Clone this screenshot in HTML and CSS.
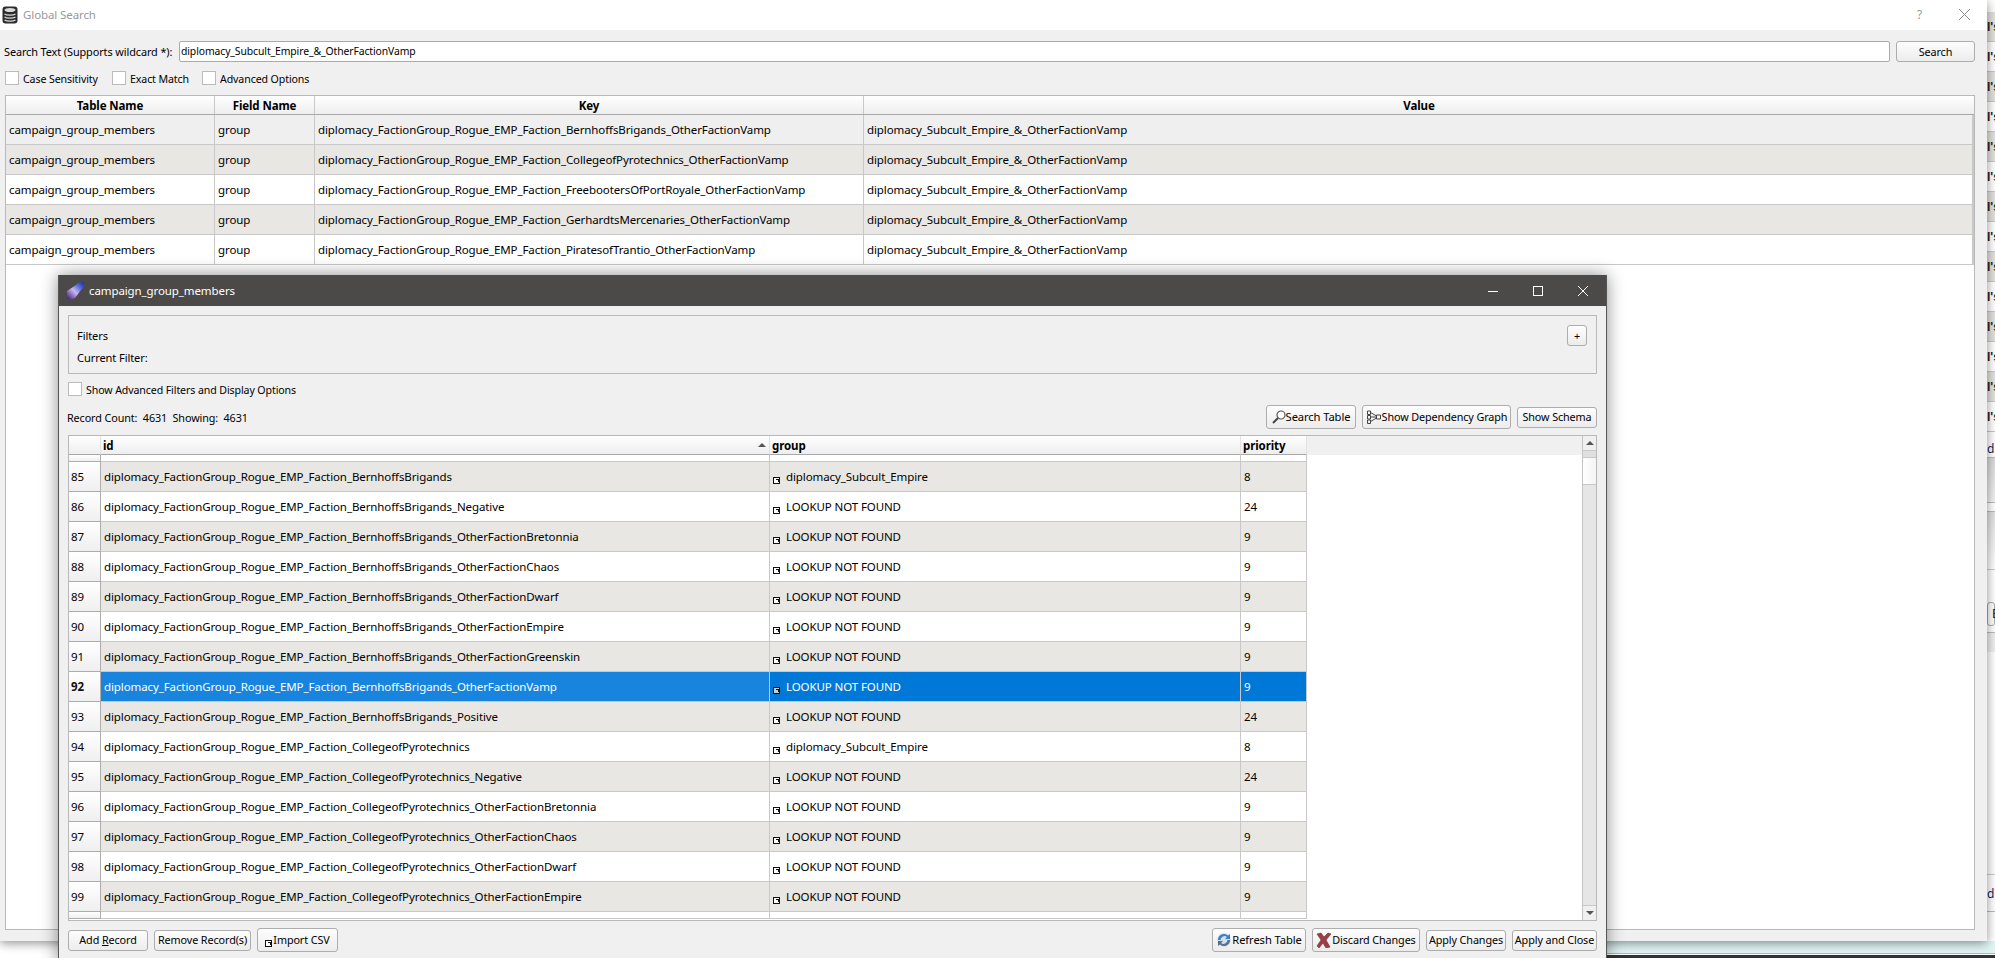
FILE: index.html
```html
<!DOCTYPE html>
<html lang="en">
<head>
<meta charset="utf-8">
<title>Global Search</title>
<link rel="stylesheet" href="styles.css">
</head>
<body>
<div class="desktop">
  <div class="strip">
    <div class="s-top"></div>
    <div class="s-row gray">l's</div><div class="s-row">l's</div><div class="s-row gray">l's</div><div class="s-row">l's</div>
    <div class="s-row gray">l's</div><div class="s-row">l's</div><div class="s-row gray">l's</div><div class="s-row">l's</div>
    <div class="s-row gray">l's</div><div class="s-row">l's</div><div class="s-row gray">l's</div><div class="s-row">l's</div>
    <div class="s-row gray">l's</div><div class="s-row">l's</div>
    <div class="s-d s-d1">d</div>
    <div class="s-grad1"></div>
    <div class="s-gap"></div>
    <div class="s-grad2"></div>
    <div class="s-plain1"></div>
    <div class="s-btn">E</div>
    <div class="s-grad3"></div>
    <div class="s-plain2"></div>
    <div class="s-d s-d2">d</div>
    <div class="s-end"></div>
  </div>
  <div class="desk-bottom"><div class="teal"></div><div class="dark"></div></div>

  <section class="global">
    <header class="g-title">
      <svg class="g-icon" viewBox="0 0 16 18"><rect x="0.5" y="0.5" width="15" height="17" rx="3" fill="#2b2b2b"/><ellipse cx="8" cy="4" rx="5.500" ry="2" fill="#d8d8d8"/><path d="M2.500 8c2 1.600 9 1.600 11 0M2.500 11c2 1.600 9 1.600 11 0M2.500 14c2 1.600 9 1.600 11 0" fill="none" stroke="#d8d8d8" stroke-width="1.200"/></svg>
      <span class="g-name">Global Search</span>
      <span class="g-help">?</span>
      <svg class="g-close" viewBox="0 0 11 11"><path d="M0 0l11 11M11 0L0 11" stroke="#8a8a8a" stroke-width="1" fill="none"/></svg>
    </header>
    <div class="g-body">
      <div class="g-search">
        <label class="g-label">Search Text (Supports wildcard *):</label>
        <div class="g-input">diplomacy_Subcult_Empire_&amp;_OtherFactionVamp</div>
        <button class="btn g-btn">Search</button>
      </div>
      <div class="g-checks">
        <span class="chk"><i class="box"></i>Case Sensitivity</span>
        <span class="chk"><i class="box"></i>Exact Match</span>
        <span class="chk"><i class="box"></i>Advanced Options</span>
      </div>
      <div class="g-table">
        <div class="g-row g-head"><div>Table Name</div><div>Field Name</div><div>Key</div><div>Value</div></div>
        <div class="g-row first"><div>campaign_group_members</div><div>group</div><div>diplomacy_FactionGroup_Rogue_EMP_Faction_BernhoffsBrigands_OtherFactionVamp</div><div>diplomacy_Subcult_Empire_&amp;_OtherFactionVamp</div></div>
        <div class="g-row alt"><div>campaign_group_members</div><div>group</div><div>diplomacy_FactionGroup_Rogue_EMP_Faction_CollegeofPyrotechnics_OtherFactionVamp</div><div>diplomacy_Subcult_Empire_&amp;_OtherFactionVamp</div></div>
        <div class="g-row"><div>campaign_group_members</div><div>group</div><div>diplomacy_FactionGroup_Rogue_EMP_Faction_FreebootersOfPortRoyale_OtherFactionVamp</div><div>diplomacy_Subcult_Empire_&amp;_OtherFactionVamp</div></div>
        <div class="g-row alt"><div>campaign_group_members</div><div>group</div><div>diplomacy_FactionGroup_Rogue_EMP_Faction_GerhardtsMercenaries_OtherFactionVamp</div><div>diplomacy_Subcult_Empire_&amp;_OtherFactionVamp</div></div>
        <div class="g-row"><div>campaign_group_members</div><div>group</div><div>diplomacy_FactionGroup_Rogue_EMP_Faction_PiratesofTrantio_OtherFactionVamp</div><div>diplomacy_Subcult_Empire_&amp;_OtherFactionVamp</div></div>
      </div>
    </div>
  </section>

  <section class="sub">
    <header class="s-title">
      <svg class="s-icon" viewBox="0 0 17 17"><defs><linearGradient id="wand" x1="0" y1="1" x2="1" y2="0"><stop offset="0" stop-color="#3a1a7a"/><stop offset="0.45" stop-color="#c9b8ee"/><stop offset="0.7" stop-color="#5a6fe0"/><stop offset="1" stop-color="#1226b8"/></linearGradient></defs><path d="M0 9L9 3l2-2 6-1-1 6-2 2-6 8-3 1H0z" fill="url(#wand)"/></svg>
      <span class="s-name">campaign_group_members</span>
      <div class="win-btns">
        <svg viewBox="0 0 10 10"><path d="M0 5.500h10" stroke="#fff" fill="none"/></svg>
        <svg viewBox="0 0 10 10"><rect x="0.5" y="0.5" width="9" height="9" stroke="#fff" fill="none"/></svg>
        <svg viewBox="0 0 10 10"><path d="M0 0l10 10M10 0L0 10" stroke="#fff" fill="none"/></svg>
      </div>
    </header>
    <div class="s-body">
      <div class="filters">
        <div class="f-text"><div>Filters</div><div>Current Filter:</div></div>
        <button class="btn plus">+</button>
      </div>
      <div class="adv"><span class="chk"><i class="box"></i>Show Advanced Filters and Display Options</span></div>
      <div class="tools">
        <span class="count">Record Count:&nbsp; 4631&nbsp; Showing:&nbsp; 4631</span>
        <button class="btn tall w-search"><svg class="ic" viewBox="0 0 14 14"><circle cx="9" cy="5" r="4" fill="#fff" stroke="#555" stroke-width="1.200"/><path d="M6 8L1 13" stroke="#444" stroke-width="2" fill="none"/></svg><span>Search Table</span></button>
        <button class="btn tall w-dep"><svg class="ic ic-dep" viewBox="0 0 15 14"><path d="M1.500 1h3v3.500h-3zM1.500 5.500h3V9h-3zM1.500 10h3v3.500h-3zM10.500 5h4v4h-4zM4.500 2.500L10.500 6M4.500 7h6M4.500 11.500L10.500 8" fill="none" stroke="#444"/></svg><span>Show Dependency Graph</span></button>
        <button class="btn w-schema"><span>Show Schema</span></button>
      </div>
      <div class="tbl">
        <div class="tbl-main">
          <div class="t-row t-head"><div></div><div class="sorted">id</div><div>group</div><div>priority</div></div>
          <div class="t-row t-part"><div></div><div></div><div></div><div></div></div>
          <div class="t-row alt"><div>85</div><div>diplomacy_FactionGroup_Rogue_EMP_Faction_BernhoffsBrigands</div><div><i class="lnk"></i>diplomacy_Subcult_Empire</div><div>8</div></div>
          <div class="t-row"><div>86</div><div>diplomacy_FactionGroup_Rogue_EMP_Faction_BernhoffsBrigands_Negative</div><div><i class="lnk"></i>LOOKUP NOT FOUND</div><div>24</div></div>
          <div class="t-row alt"><div>87</div><div>diplomacy_FactionGroup_Rogue_EMP_Faction_BernhoffsBrigands_OtherFactionBretonnia</div><div><i class="lnk"></i>LOOKUP NOT FOUND</div><div>9</div></div>
          <div class="t-row"><div>88</div><div>diplomacy_FactionGroup_Rogue_EMP_Faction_BernhoffsBrigands_OtherFactionChaos</div><div><i class="lnk"></i>LOOKUP NOT FOUND</div><div>9</div></div>
          <div class="t-row alt"><div>89</div><div>diplomacy_FactionGroup_Rogue_EMP_Faction_BernhoffsBrigands_OtherFactionDwarf</div><div><i class="lnk"></i>LOOKUP NOT FOUND</div><div>9</div></div>
          <div class="t-row"><div>90</div><div>diplomacy_FactionGroup_Rogue_EMP_Faction_BernhoffsBrigands_OtherFactionEmpire</div><div><i class="lnk"></i>LOOKUP NOT FOUND</div><div>9</div></div>
          <div class="t-row alt"><div>91</div><div>diplomacy_FactionGroup_Rogue_EMP_Faction_BernhoffsBrigands_OtherFactionGreenskin</div><div><i class="lnk"></i>LOOKUP NOT FOUND</div><div>9</div></div>
          <div class="t-row sel"><div>92</div><div>diplomacy_FactionGroup_Rogue_EMP_Faction_BernhoffsBrigands_OtherFactionVamp</div><div><i class="lnk"></i>LOOKUP NOT FOUND</div><div>9</div></div>
          <div class="t-row alt"><div>93</div><div>diplomacy_FactionGroup_Rogue_EMP_Faction_BernhoffsBrigands_Positive</div><div><i class="lnk"></i>LOOKUP NOT FOUND</div><div>24</div></div>
          <div class="t-row"><div>94</div><div>diplomacy_FactionGroup_Rogue_EMP_Faction_CollegeofPyrotechnics</div><div><i class="lnk"></i>diplomacy_Subcult_Empire</div><div>8</div></div>
          <div class="t-row alt"><div>95</div><div>diplomacy_FactionGroup_Rogue_EMP_Faction_CollegeofPyrotechnics_Negative</div><div><i class="lnk"></i>LOOKUP NOT FOUND</div><div>24</div></div>
          <div class="t-row"><div>96</div><div>diplomacy_FactionGroup_Rogue_EMP_Faction_CollegeofPyrotechnics_OtherFactionBretonnia</div><div><i class="lnk"></i>LOOKUP NOT FOUND</div><div>9</div></div>
          <div class="t-row alt"><div>97</div><div>diplomacy_FactionGroup_Rogue_EMP_Faction_CollegeofPyrotechnics_OtherFactionChaos</div><div><i class="lnk"></i>LOOKUP NOT FOUND</div><div>9</div></div>
          <div class="t-row"><div>98</div><div>diplomacy_FactionGroup_Rogue_EMP_Faction_CollegeofPyrotechnics_OtherFactionDwarf</div><div><i class="lnk"></i>LOOKUP NOT FOUND</div><div>9</div></div>
          <div class="t-row alt"><div>99</div><div>diplomacy_FactionGroup_Rogue_EMP_Faction_CollegeofPyrotechnics_OtherFactionEmpire</div><div><i class="lnk"></i>LOOKUP NOT FOUND</div><div>9</div></div>
          <div class="t-row t-part"><div></div><div></div><div></div><div></div></div>
        </div>
        <div class="vbar">
          <div class="vbtn"><i class="tri up"></i></div>
          <div class="vpre"></div>
          <div class="vthumb"></div>
          <div class="vgroove"></div>
          <div class="vbtn"><i class="tri down"></i></div>
        </div>
      </div>
      <div class="actions">
        <button class="btn w-add"><span>Add <u>R</u>ecord</span></button>
        <button class="btn w-rem"><span>Remove Record(s)</span></button>
        <button class="btn tall w-csv"><i class="lnk lnk-btn"></i><span>Import CSV</span></button>
        <span class="spacer"></span>
        <button class="btn tall w-ref"><svg class="ic ic-big" viewBox="0 0 16 16"><circle cx="8" cy="8" r="7" fill="#cfe0ef"/><path d="M2 8a6 6 0 0 1 10-4.500L14 2v5H9l2-2a4 4 0 0 0-6.500 3z" fill="#3f7fc0"/><path d="M14 8a6 6 0 0 1-10 4.500L2 14V9h5l-2 2a4 4 0 0 0 6.500-3z" fill="#5b6f86"/></svg><span>Refresh Table</span></button>
        <button class="btn tall w-dis"><svg class="ic ic-big" viewBox="0 0 16 16"><path d="M1 2l4-1 3 4 4-4 3 1-5 6 4 7-4 1-3-5-4 5-2-2 4-6z" fill="#9c3f46" stroke="#6e2d33" stroke-width="0.600"/></svg><span>Discard Changes</span></button>
        <button class="btn w-app"><span>Apply Changes</span></button>
        <button class="btn w-cls"><span>Apply and Close</span></button>
      </div>
    </div>
  </section>
</div>
</body>
</html>
```
FILE: styles.css
```css
* { box-sizing: border-box; }
html, body { margin: 0; padding: 0; height: 100%; overflow: hidden; background: #fff; }
body { font: 11.5px/16px "Noto Sans", "Open Sans", sans-serif; letter-spacing: -0.1px; color: #000; }
.desktop { position: relative; width: 1995px; height: 958px; overflow: hidden; background: #fff; }

/* window peeking out behind on the right */
.strip { position: absolute; left: 1987px; top: 0; width: 8px; display: flex; flex-direction: column; font: bold 12px/30px "Liberation Sans", sans-serif; letter-spacing: 0; color: #222; overflow: hidden; }
.s-top { height: 12px; }
.s-row { height: 30px; border-bottom: 1px solid #c8c8c8; white-space: nowrap; }
.s-row.gray { background: #e2e1dd; }
.s-d { font: 12px/25px "Noto Sans", sans-serif; height: 25px; border-bottom: 1px solid #bbb; color: #0a2a5a; }
.s-d1 { height: 26px; line-height: 33px; }
.s-grad1 { height: 45px; background: linear-gradient(#d8d8d8, #f2f2f2); border-bottom: 1px solid #bbb; }
.s-gap { height: 9px; border-bottom: 1px solid #bbb; background: #fff; }
.s-grad2 { height: 58px; background: linear-gradient(#e0e0e0, #fff); border-bottom: 1px solid #ccc; }
.s-plain1 { height: 32px; }
.s-btn { height: 24px; border: 1px solid #aaa; border-radius: 3px; padding-left: 4px; font: 12px/22px "Noto Sans", sans-serif; margin-bottom: 6px; }
.s-grad3 { height: 20px; background: #eee; border-top: 1px solid #bbb; }
.s-plain2 { height: 223px; border-bottom: 1px solid #ccc; }
.s-d2 { height: 37px; line-height: 37px; }
.s-end { height: 29px; background: #fff; }
.desk-bottom { position: absolute; left: 1607px; right: 0; top: 941px; height: 17px; display: flex; flex-direction: column; }
.teal { height: 13px; background: #e0f4f4; border-bottom: 1px solid #b5b5b5; }
.dark { height: 3px; margin-top: 1px; background: #333; }

/* Global search window */
.global { position: absolute; left: 0; top: 0; width: 1987px; height: 941px; display: flex; flex-direction: column; background: #f0f0f0; box-shadow: 0 2px 10px rgba(0,0,0,.45); }
.g-title { height: 30px; flex: none; background: #fff; display: flex; align-items: center; padding: 0 0 0 2px; color: #999; }
.g-icon { width: 16px; height: 18px; }
.g-name { margin-left: 5px; flex: 1; }
.g-help { width: 16px; color: #999; font-size: 12px; margin-right: 26px; }
.g-close { width: 11px; height: 11px; margin-right: 17px; margin-top: -2px; }
.g-body { flex: 1; display: flex; flex-direction: column; padding: 11px 12px 11px 5px; min-height: 0; }
.g-search { display: flex; align-items: center; height: 21px; flex: none; margin-left: -1px; }
.g-label { width: 175px; flex: none; white-space: nowrap; font-size: 10.9px; }
.g-input { flex: 1; height: 21px; background: #fff; border: 1px solid #aaa; border-radius: 2px; line-height: 19px; padding-left: 1px; font-size: 10.4px; }
.g-btn { width: 79px; height: 21px; margin-left: 6px; }
.g-checks { display: flex; height: 14px; margin-top: 9px; flex: none; }
.g-checks .chk:nth-child(1) { width: 107px; }
.g-checks .chk:nth-child(2) { width: 90px; }
.chk { display: flex; align-items: flex-start; height: 14px; white-space: nowrap; font-size: 10.6px; line-height: 16px; }
.box { width: 14px; height: 14px; background: #fff; border: 1px solid #bbb; margin-right: 4px; flex: none; }
.g-table { flex: 1; margin-top: 10px; border: 1px solid #b8b8b8; background: #fff; min-height: 0; }
.g-row { display: grid; grid-template-columns: 209px 100px 549px 1fr; height: 30px; background: #fff; border-bottom: 1px solid #c8c8c8; }
.g-row > div { padding-left: 3px; border-right: 1px solid #c8c8c8; line-height: 30px; white-space: nowrap; overflow: hidden; }
.g-row > div:last-child { border-right: 2px solid #c8c8c8; }
.g-row.first { background: #efefef; }
.g-row.alt { background: #e8e7e3; }
.g-head { height: 19px; background: linear-gradient(#fff, #eee); border-bottom: 1px solid #a8a8a8; }
.g-head > div { text-align: center; font-weight: 700; line-height: 19px; padding: 0; color: #000; }
.g-head > div:last-child { border-right: 0; }

/* Table window */
.sub { position: absolute; left: 58px; top: 275px; width: 1549px; height: 690px; display: flex; flex-direction: column; background: #f0f0f0; border: 1px solid #555; border-top: 0; box-shadow: 0 0 16px rgba(0,0,0,.45); }
.s-title { height: 31px; flex: none; background: #4c4a48; color: #fff; display: flex; align-items: center; padding-left: 8px; }
.s-icon { width: 17px; height: 17px; }
.s-name { margin-left: 5px; flex: 1; }
.win-btns { display: flex; width: 118px; gap: 35px; margin-right: 18px; justify-content: flex-end; align-items: center; }
.win-btns svg { width: 10px; height: 10px; }
.s-body { flex: 1; display: flex; flex-direction: column; padding: 9px 9px 0; min-height: 0; }
.filters { flex: none; height: 59px; border: 1px solid #b8b8b8; display: flex; justify-content: space-between; padding: 9px 9px 0 8px; font-size: 11.1px; }
.f-text > div { height: 22px; line-height: 22px; }
.plus { width: 20px; height: 20px; padding: 0; font-size: 14px; }
.adv { flex: none; margin-top: 8px; height: 14px; }
.tools { flex: none; margin-top: 9px; height: 24px; display: flex; align-items: center; gap: 6px; }
.count { flex: 1; margin-left: -1px; padding-top: 2px; font-size: 10.8px; }
.tbl { flex: none; height: 486px; margin-top: 6px; border: 1px solid #b8b8b8; display: flex; background: #fff; overflow: hidden; }
.tbl-main { flex: 1; min-width: 0; overflow: hidden; }
.t-row { display: grid; grid-template-columns: 32px 669px 471px 66px; height: 30px; }
.t-row > div { background: #fff; border-right: 1px solid #c8c8c8; border-bottom: 1px solid #c8c8c8; padding-left: 3px; line-height: 30px; white-space: nowrap; overflow: hidden; }
.t-row > div:first-child { background: linear-gradient(#fff, #efefef); border-right-color: #adadad; border-bottom-color: #adadad; padding-left: 2px; }
.t-row.alt > div:not(:first-child) { background: #e8e7e3; }
.t-row.sel > div { background: #0078d7; color: #fff; }
.t-row.sel > div:nth-child(2) { background: #1884de; }
.t-row.sel > div:first-child { background: linear-gradient(#fff, #efefef); color: #111; font-weight: 700; }
.t-head { height: 19px; background: #f0f0f0; }
.t-head > div, .t-head > div:first-child { background: linear-gradient(#fff, #eee); border-right: 1px solid #e2e2e2; border-bottom: 1px solid #a8a8a8; font-weight: 700; line-height: 19px; padding-left: 2px; color: #000; }
.sorted { position: relative; }
.sorted::after { content: ""; position: absolute; right: 3px; top: 7px; border: 4px solid transparent; border-top: 0; border-bottom: 4px solid #555; }
.t-part { height: 7px; }
.t-part > div { line-height: 7px; }
.vbar { flex: none; width: 14px; display: flex; flex-direction: column; border-left: 1px solid #c4c4c4; background: #e6e6e6; }
.vbtn { height: 14px; flex: none; background: #f0f0f0; display: flex; align-items: center; justify-content: center; }
.tri { border: 4px solid transparent; }
.tri.up { border-top: 0; border-bottom: 4px solid #555; }
.tri.down { border-bottom: 0; border-top: 4px solid #555; }
.vpre { height: 7px; flex: none; background: #e0e0e0; border-top: 1px solid #c8c8c8; }
.vthumb { height: 28px; flex: none; background: linear-gradient(90deg, #fff, #f4f4f4); border-top: 1px solid #c8c8c8; border-bottom: 1px solid #c8c8c8; }
.vgroove { flex: 1; background: #e6e6e6; border-bottom: 1px solid #c8c8c8; }
.actions { flex: none; margin-top: 7px; height: 24px; display: flex; align-items: center; gap: 6px; }
.spacer { flex: 1; }

.btn { font: inherit; font-size: 10.8px; letter-spacing: inherit; color: #000; border: 1px solid #adadad; border-radius: 3px; background: linear-gradient(#fdfdfd, #ececec); padding: 0; display: inline-flex; align-items: center; justify-content: center; white-space: nowrap; height: 21px; flex: none; }
.btn.tall { height: 24px; }
.w-search, .w-ref { font-size: 11.2px; }
.w-search { width: 90px; }
.w-dep { width: 149px; }
.w-schema { width: 80px; }
.w-add { width: 80px; }
.w-rem { width: 97px; }
.w-csv { width: 81px; }
.w-ref { width: 94px; }
.w-dis { width: 108px; }
.w-app { width: 80px; }
.w-cls { width: 85px; }
.ic { width: 14px; height: 14px; flex: none; }
.ic-dep { width: 15px; margin-right: 1px; }
.ic-big { width: 16px; height: 16px; }
.lnk { display: inline-block; width: 7px; height: 7px; border: 1px solid #111; background: #fff; margin: 0 6px 0 0; position: relative; top: 3px; left: 0; }
.lnk::after { content: ""; position: absolute; left: 2px; top: 1px; width: 2px; height: 2px; border-top: 1px solid #111; border-right: 1px solid #111; }
.t-row.sel .lnk { background: #ccc; }
.lnk-btn { margin-right: 1px; flex: none; }
```
